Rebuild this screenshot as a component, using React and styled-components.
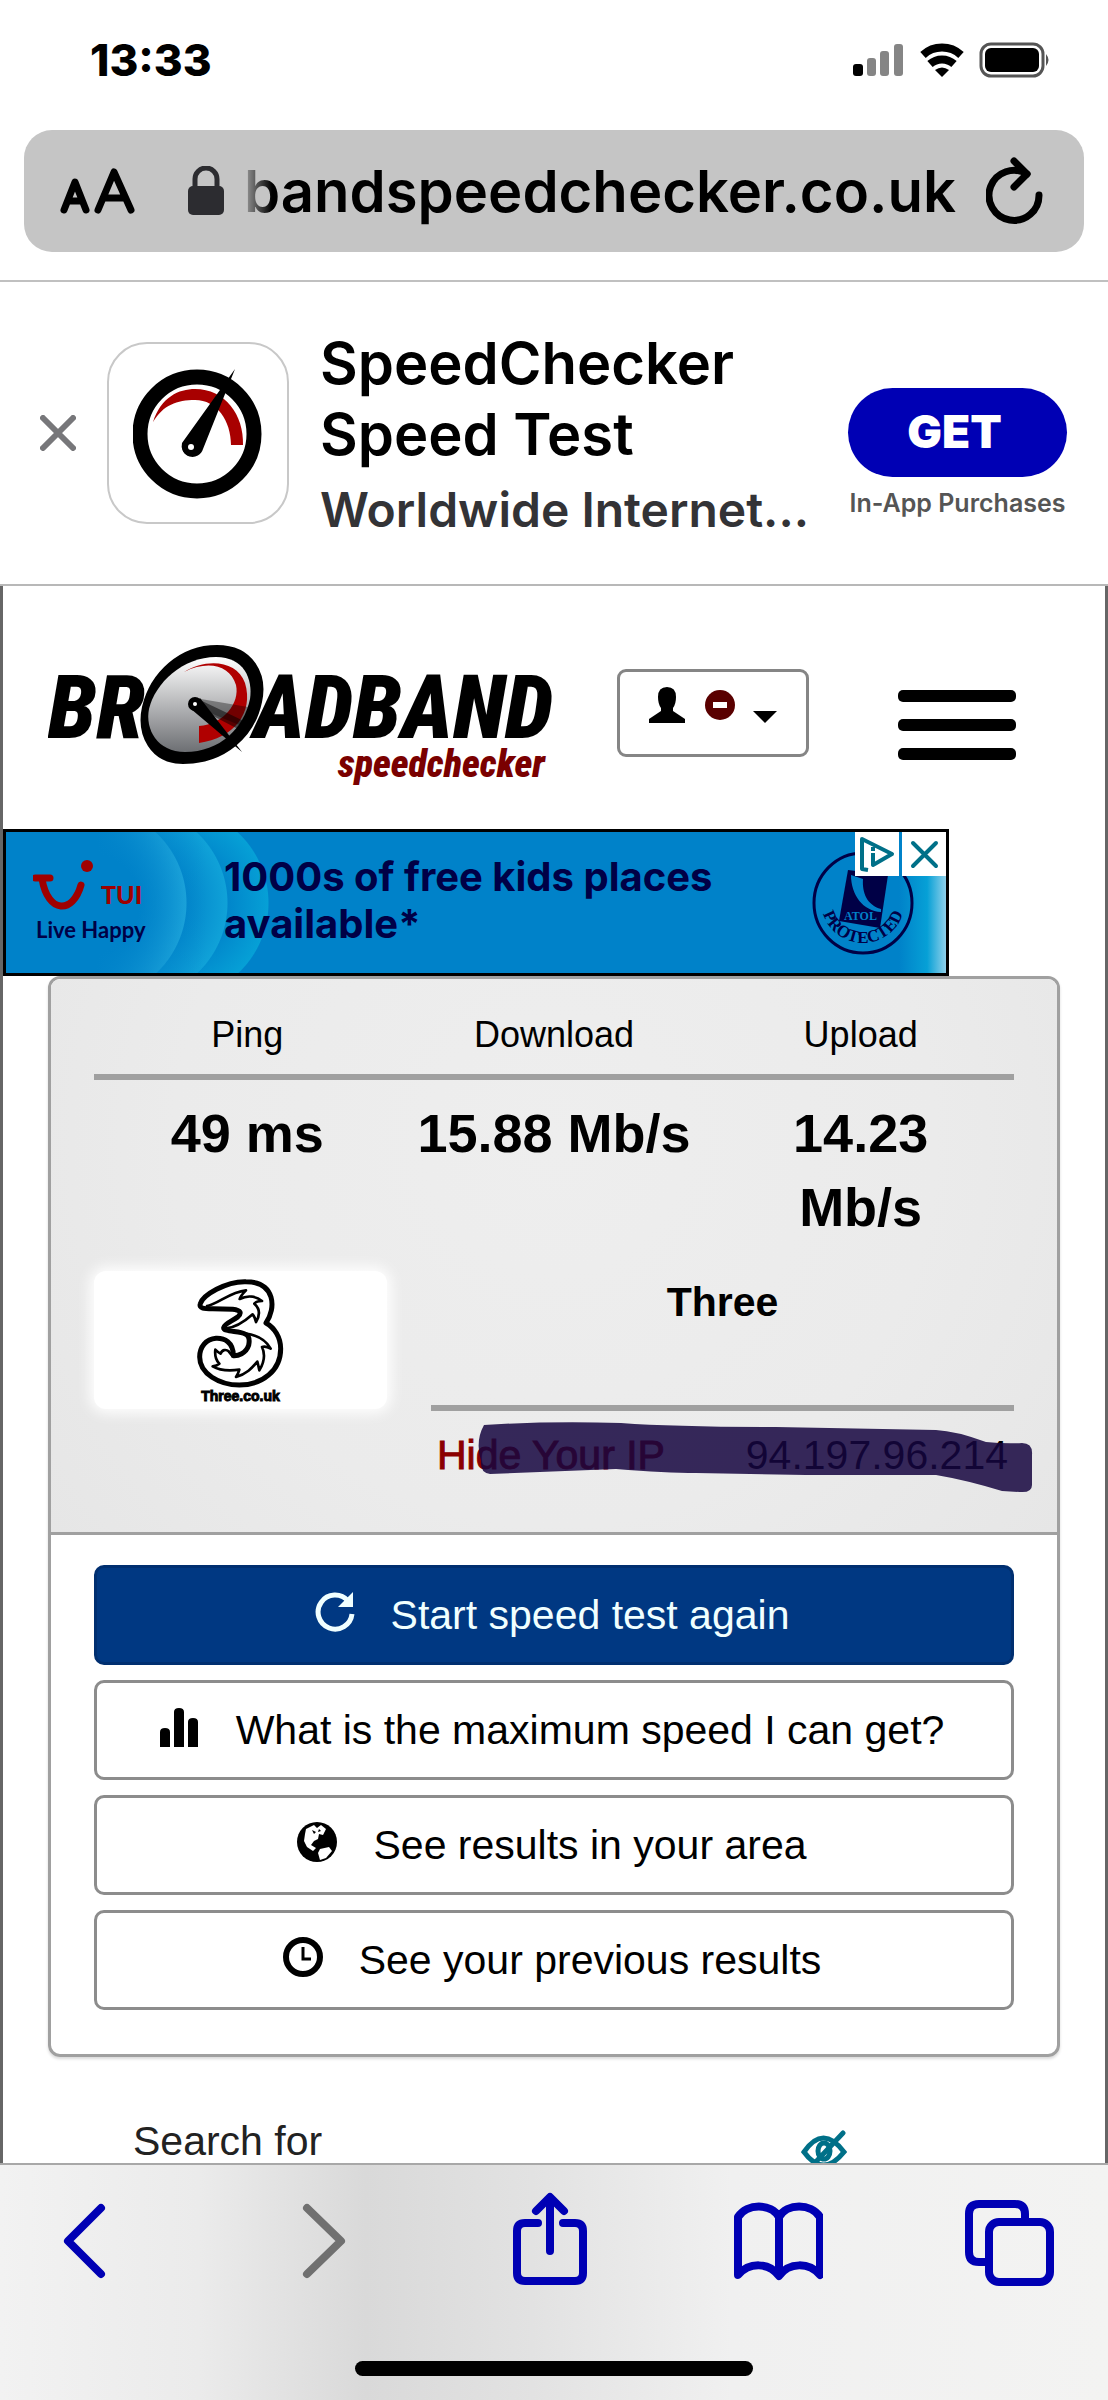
import React from "react";
import styled, { createGlobalStyle } from "styled-components";

const sans = `"Liberation Sans", Arial, sans-serif`;
const system = `Inter, "Liberation Sans", sans-serif`;

const actions = [
  { icon: "repeat", label: "Start speed test again", primary: true },
  { icon: "stats", label: "What is the maximum speed I can get?" },
  { icon: "globe", label: "See results in your area" },
  { icon: "time", label: "See your previous results" },
];

const icons = {
  repeat: (
    <>
      <path
        d="M33 9A17 17 0 1 0 37 22"
        fill="none"
        stroke="currentColor"
        strokeWidth="5"
      />
      <path d="M38 0V15H23Z" fill="currentColor" />
    </>
  ),
  stats: (
    <path
      d="M0 40V25q0-4 5-4t5 4V40ZM14 40V5q0-4 5-4t5 4V40ZM28 40V15q0-4 5-4t5 4V40Z"
      fill="currentColor"
    />
  ),
  globe: (
    <>
      <circle cx="20" cy="20" r="20" fill="currentColor" />
      <path
        d="M9 7L17 3L20 6L24 3L29 7L26 13L22 12L21 17L17 19L14 23L19 26L16 29L10 25L7 19L8 12Z"
        fill="#fff"
      />
      <path d="M23 27L32 25L35 29L29 36L23 38L21 31Z" fill="#fff" />
      <path d="M15 8L19 10L17 12ZM22 7L24 9L21 10Z" fill="currentColor" />
    </>
  ),
  time: (
    <>
      <circle
        cx="20"
        cy="20"
        r="17"
        fill="none"
        stroke="currentColor"
        strokeWidth="6"
      />
      <path
        d="M20 10V22H28"
        fill="none"
        stroke="currentColor"
        strokeWidth="3"
      />
    </>
  ),
};

const StatusIcons = () => (
  <svg width="198" height="36" viewBox="0 0 198 36">
    <rect x="0" y="22" width="10" height="12" rx="3" />
    <g fill="#858585">
      <rect x="14" y="16" width="9" height="18" rx="3" />
      <rect x="27" y="9" width="9" height="25" rx="3" />
      <rect x="41" y="2" width="9" height="32" rx="3" />
    </g>
    <g fill="none" stroke="#000" strokeWidth="8">
      <path d="M70 13A28 28 0 0 1 108 13" />
      <path d="M77 22A18 18 0 0 1 101 22" />
    </g>
    <path d="M82 28Q89 23 96 28L89 35Z" />
    <rect
      x="128"
      y="2"
      width="62"
      height="32"
      rx="10"
      fill="none"
      stroke="#555"
      strokeWidth="3"
    />
    <rect x="132" y="6" width="54" height="24" rx="6" />
    <path d="M193 12Q198 18 193 24Z" fill="#555" />
  </svg>
);

const AppIcon = () => (
  <svg width="130" height="140" viewBox="0 0 130 140">
    <circle
      cx="64"
      cy="71"
      r="57"
      fill="none"
      stroke="#000"
      strokeWidth="15"
    />
    <path
      d="M20 59C28 34 46 26 62 26C92 26 111 52 110 82H98C98 58 84 37 62 37C44 37 30 42 20 59Z"
      fill="#a80000"
    />
    <path d="M102 6L70 86A9 9 0 0 1 49 80Z" />
    <circle cx="58" cy="84" r="9" />
    <circle cx="58" cy="84" r="3" fill="#fff" />
  </svg>
);

const Logo = () => (
  <svg width="510" height="152" viewBox="0 0 510 152">
    <defs>
      <linearGradient id="dial" x1="0" y1="0" x2="0" y2="1">
        <stop offset="0" stopColor="#fff" />
        <stop offset="1" stopColor="#6d6f73" />
      </linearGradient>
    </defs>
    <LogoText x="0" y="101" $size={88}>
      BR
    </LogoText>
    <LogoText x="505" y="101" $size={88} textAnchor="end">
      ADBAND
    </LogoText>
    <LogoText x="497" y="140" $size={38} textAnchor="end" fill="#7a0000">
      speedchecker
    </LogoText>
    <path
      d="M169 9C205 9 219 38 213 65C206 99 177 126 135 126C103 126 89 98 95 70C103 36 132 9 169 9Z"
      stroke="#000"
      strokeWidth="2"
    />
    <path
      d="M168 20C196 20 205 42 202 62C196 91 172 115 137 115C109 115 97 92 101 72C107 46 135 20 168 20Z"
      fill="url(#dial)"
    />
    <path
      d="M136 35C158 21 189 23 197 46C206 76 186 101 151 106V89C176 87 192 66 188 48C182 28 160 23 136 35Z"
      fill="#b00000"
    />
    <path d="M147 61L200 70L196 90L148 70Z" fill="#000" opacity="0.35" />
    <path d="M152 63L198 85L190 92L148 70Z" fill="#000" opacity="0.5" />
    <path d="M152 61L194 115L143 72Z" />
    <circle cx="147" cy="67" r="7" />
    <circle cx="147" cy="67" r="2" fill="#fff" />
  </svg>
);

const TuiLogo = () => (
  <svg width="120" height="110" viewBox="0 -9 120 110">
    <path
      d="M2 21H17M9 22C15 57 40 57 48 28"
      fill="none"
      stroke="#a00000"
      strokeWidth="7"
      strokeLinecap="round"
    />
    <circle cx="54" cy="9" r="6" fill="#a00000" />
    <AdText x="68" y="47" fill="#a00000" $size={25} $heavy>
      TUI
    </AdText>
    <AdText x="3" y="81" fill="#000046" $size={22}>
      Live Happy
    </AdText>
  </svg>
);

const AtolBadge = () => (
  <svg width="104" height="108" viewBox="0 0 104 108">
    <defs>
      <path id="atolCurve" d="M11 61A42 42 0 0 0 93 61" />
    </defs>
    <ellipse
      cx="52"
      cy="54"
      rx="49"
      ry="50"
      fill="none"
      stroke="#000046"
      strokeWidth="3"
    />
    <path d="M37 21L77 26L69 79L28 72Z" fill="#000046" />
    <path
      d="M40 26C40 46 52 62 70 63V60C56 56 51 44 52 30Z"
      fill="#0080c8"
    />
    <SerifText x="33" y="71" $size={12} fill="#0080c8">
      ATOL
    </SerifText>
    <SerifText $size={17} fill="#000046">
      <textPath href="#atolCurve" startOffset="50%" textAnchor="middle">
        PROTECTED
      </textPath>
    </SerifText>
  </svg>
);

const ThreeLogo = () => (
  <svg width="94" height="114" viewBox="404 104 282 342">
    <g fill="none" stroke="#000" strokeLinejoin="round">
      <path
        strokeWidth="15"
        d="M620 248C650 205 650 125 560 124C500 122 430 165 423 190C418 205 435 205 460 205L520 207C545 210 548 218 535 230C520 242 495 250 493 262C492 272 520 272 545 277C570 282 572 295 568 315C560 340 535 347 522 346C522 305 495 293 470 294C440 296 421 320 421 350C421 400 480 434 540 434C610 434 664 390 664 325C664 290 645 262 620 248Z"
      />
      <path
        strokeWidth="8"
        d="M440 198C480 190 510 155 560 150C550 160 543 168 541 176C565 163 590 168 608 182C600 182 590 184 585 190C602 205 602 225 590 245C588 235 585 228 580 222C560 240 530 262 500 264"
      />
      <path
        strokeWidth="8"
        d="M560 280C600 285 620 300 634 325C625 320 615 318 608 320C620 345 612 370 600 390C598 380 596 372 594 364C580 380 565 400 530 410C535 402 538 396 540 388C510 392 480 390 460 378C468 377 474 375 480 370C470 360 466 345 468 328C474 334 478 338 484 340C488 328 500 326 508 333L520 348"
      />
    </g>
  </svg>
);

const App = () => {
  return (
    <>
      <GlobalStyle />
      <Page>
        <StatusBar>
          <Clock>13:33</Clock>
          <StatusIcons />
        </StatusBar>
        <AddressArea>
          <AddressBar>
            <IconButton aria-label="Text size">
              <svg width="76" height="48" viewBox="0 0 76 48">
                <g
                  fill="none"
                  stroke="#000"
                  strokeWidth="7"
                  strokeLinecap="round"
                  strokeLinejoin="round"
                >
                  <path d="M4 43L15 15L26 43M8 34H22" />
                  <path d="M38 43L54 5L71 43M44 31H65" />
                </g>
              </svg>
            </IconButton>
            <svg width="36" height="50" viewBox="0 0 36 50">
              <rect y="20" width="36" height="29" rx="5" fill="#2c2c30" />
              <path
                d="M7 21V13A11 11 0 0 1 29 13V21"
                fill="none"
                stroke="#2c2c30"
                strokeWidth="5"
              />
            </svg>
            <AddressInput
              aria-label="Address"
              readOnly
              value="bandspeedchecker.co.uk"
            />
            <IconButton aria-label="Reload">
              <svg width="58" height="68" viewBox="0 0 58 68">
                <g
                  fill="none"
                  stroke="#000"
                  strokeWidth="7"
                  strokeLinecap="round"
                  strokeLinejoin="round"
                >
                  <path d="M41 17A25 25 0 1 0 53 38" />
                  <path d="M28 4L41 17L28 30" />
                </g>
              </svg>
            </IconButton>
          </AddressBar>
        </AddressArea>

        <AppBanner>
          <IconButton aria-label="Close banner">
            <svg width="36" height="36" viewBox="0 0 36 36">
              <path
                d="M3 3L33 33M33 3L3 33"
                stroke="#77777a"
                strokeWidth="6"
                strokeLinecap="round"
              />
            </svg>
          </IconButton>
          <AppTile>
            <AppIcon />
          </AppTile>
          <AppInfo>
            <AppTitle>
              SpeedChecker
              <br />
              Speed Test
            </AppTitle>
            <AppSubtitle>Worldwide Internet...</AppSubtitle>
          </AppInfo>
          <AppGet>
            <GetButton>GET</GetButton>
            <Purchases>In-App Purchases</Purchases>
          </AppGet>
        </AppBanner>

        <Site>
          <SiteHeader>
            <LogoLink href="#" aria-label="Broadband speedchecker">
              <Logo />
            </LogoLink>
            <AccountButton aria-label="Account">
              <svg width="132" height="40" viewBox="0 0 132 40">
                <path d="M9 11Q9 1 18 1T27 11Q27 18 24 22V25L36 33V37H0V33L12 25V22Q9 18 9 11Z" />
                <circle cx="71" cy="19" r="15" fill="#5a0000" />
                <rect x="64" y="16" width="14" height="6" fill="#fff" />
                <path d="M104 25H128L116 37Z" />
              </svg>
            </AccountButton>
            <MenuButton aria-label="Menu">
              <span />
              <span />
              <span />
            </MenuButton>
          </SiteHeader>

          <Ad>
            <TuiLogo />
            <AdHeadline>
              1000s of free kids places
              <br />
              available*
            </AdHeadline>
            <AtolBadge />
            <AdChoices>
              <AdButton aria-label="Ad information">
                <svg width="44" height="44" viewBox="0 0 44 44">
                  <g fill="none" stroke="#007088" strokeLinejoin="round">
                    <path strokeWidth="4" d="M13 38L7 37V7L37 22L18 33V21" />
                    <path strokeWidth="4" d="M18 15V19" />
                  </g>
                </svg>
              </AdButton>
              <AdButton aria-label="Close ad">
                <svg width="44" height="44" viewBox="0 0 44 44">
                  <path
                    d="M11 11L34 34M34 11L11 34"
                    stroke="#007088"
                    strokeWidth="4"
                    strokeLinecap="round"
                  />
                </svg>
              </AdButton>
            </AdChoices>
          </Ad>

          <Card>
            <Results>
              <ResultTable>
                <thead>
                  <tr>
                    <th scope="col">Ping</th>
                    <th scope="col">Download</th>
                    <th scope="col">Upload</th>
                  </tr>
                </thead>
                <tbody>
                  <tr>
                    <td>49 ms</td>
                    <td>15.88 Mb/s</td>
                    <td>14.23 Mb/s</td>
                  </tr>
                </tbody>
              </ResultTable>
              <Provider>
                <ProviderLogo>
                  <ThreeLogo />
                  <span>Three.co.uk</span>
                </ProviderLogo>
                <ProviderInfo>
                  <ProviderName>Three</ProviderName>
                  <IpRow>
                    <a href="#">Hide Your IP</a>
                    <span>94.197.96.214</span>
                    <Scribble
                      width="560"
                      height="74"
                      viewBox="0 0 560 74"
                      aria-hidden="true"
                    >
                      <path d="M8 4Q70 0 145 2Q200 6 300 6L460 9Q480 10 510 21Q530 23 546 22Q557 22 556 34V64Q556 72 544 71L526 70Q490 59 460 54L330 54L220 52Q190 52 140 48L14 53Q4 52 5 40Q-1 20 8 4Z" />
                    </Scribble>
                  </IpRow>
                </ProviderInfo>
              </Provider>
            </Results>
            <Actions>
              {actions.map((action) => (
                <ActionButton key={action.label} $primary={action.primary}>
                  <svg width="40" height="40" viewBox="0 0 40 40">
                    {icons[action.icon]}
                  </svg>
                  {action.label}
                </ActionButton>
              ))}
            </Actions>
          </Card>

          <SearchRow>
            <span>Search for</span>
            <svg width="46" height="46" viewBox="0 0 46 46">
              <g
                fill="none"
                stroke="#007088"
                strokeWidth="5"
                strokeLinecap="round"
              >
                <path d="M3 22Q22 -6 43 22Q22 48 3 22Z" />
                <ellipse cx="23" cy="21" rx="6" ry="8" />
                <path d="M10 37L42 3" />
              </g>
            </svg>
          </SearchRow>
        </Site>

        <Toolbar>
          <ToolbarButtons>
            <ToolButton aria-label="Back">
              <path d="M60 3L27 36L60 69" />
            </ToolButton>
            <ToolButton aria-label="Forward" $muted>
              <path d="M35 3L69 36L35 69" />
            </ToolButton>
            <ToolButton aria-label="Share">
              <path d="M35 18H22Q14 18 14 26V68Q14 76 22 76H72Q80 76 80 68V26Q80 18 72 18H60" />
              <path d="M47 46V-7M33 6L47 -8L61 6" />
            </ToolButton>
            <ToolButton aria-label="Bookmarks">
              <path d="M46 12C38 -2 14 -2 5 12V70C16 57 36 57 46 71C56 57 76 57 87 70V12C78 -2 54 -2 46 12V69" />
            </ToolButton>
            <ToolButton aria-label="Tabs">
              <path d="M22 57H15Q5 57 5 47V9Q5 -1 15 -1H51Q61 -1 61 9V15" />
              <rect x="25" y="17" width="61" height="60" rx="10" />
            </ToolButton>
          </ToolbarButtons>
          <HomeIndicator />
        </Toolbar>
      </Page>
    </>
  );
};

const ToolButton = ({ children, $muted, ...rest }) => (
  <IconButton {...rest}>
    <ToolIcon width="90" height="100" viewBox="0 -14 90 100" $muted={$muted}>
      {children}
    </ToolIcon>
  </IconButton>
);

export default App;

const GlobalStyle = createGlobalStyle`
  * {
    box-sizing: border-box;
  }
  body {
    margin: 0;
    background: #fff;
    color: #000;
    font-family: ${sans};
  }
  button {
    font-family: inherit;
    color: inherit;
    cursor: pointer;
  }
  svg {
    display: block;
    flex-shrink: 0;
  }
`;

const Page = styled.div`
  display: flex;
  flex-direction: column;
  height: 100vh;
  overflow: hidden;
`;

const StatusBar = styled.div`
  display: flex;
  flex-shrink: 0;
  align-items: center;
  justify-content: space-between;
  height: 120px;
  padding: 0 57px 0 90px;
  font-family: ${system};
`;

const Clock = styled.span`
  font-size: 44px;
  font-weight: 800;
`;

const AddressArea = styled.div`
  flex-shrink: 0;
  padding: 10px 24px 28px;
  border-bottom: 2px solid #c0c0c0;
`;

const AddressBar = styled.div`
  display: flex;
  align-items: center;
  height: 122px;
  padding: 0 40px 0 36px;
  border-radius: 28px;
  background: #c5c5c5;
  & > svg {
    margin: 0 20px 0 52px;
  }
`;

const AddressInput = styled.input`
  flex: 1;
  min-width: 0;
  padding: 0;
  border: 0;
  outline: 0;
  background: none;
  color: #000;
  font-family: ${system};
  font-size: 58px;
  font-weight: 600;
  mask-image: linear-gradient(to right, rgba(0, 0, 0, 0.2), #000 28px);
`;

const IconButton = styled.button`
  display: flex;
  flex-shrink: 0;
  padding: 0;
  border: 0;
  background: none;
`;

const AppBanner = styled.section`
  display: flex;
  flex-shrink: 0;
  align-items: center;
  height: 304px;
  padding: 0 41px 0 40px;
  border-bottom: 2px solid #b8b8b8;
  font-family: ${system};
`;

const AppTile = styled.div`
  display: flex;
  flex-shrink: 0;
  align-items: center;
  justify-content: center;
  width: 182px;
  height: 182px;
  margin: 0 31px;
  border: 2px solid #c8c8c8;
  border-radius: 40px;
`;

const AppInfo = styled.div`
  flex: 1;
  padding-top: 12px;
  white-space: nowrap;
`;

const AppTitle = styled.h2`
  margin: 0;
  font-size: 58px;
  font-weight: 600;
  line-height: 71px;
`;

const AppSubtitle = styled.p`
  margin: 0;
  color: #333336;
  font-size: 48px;
  font-weight: 600;
  line-height: 80px;
`;

const AppGet = styled.div`
  display: flex;
  flex-direction: column;
  align-items: center;
  gap: 11px;
  padding-top: 40px;
`;

const GetButton = styled.button`
  width: 219px;
  height: 89px;
  padding: 0 6px 3px 0;
  border: 0;
  border-radius: 45px;
  background: #0000b4;
  && {
    color: #fff;
  }
  font-size: 46px;
  font-weight: 900;
`;

const Purchases = styled.small`
  color: #555;
  font-size: 25px;
  font-weight: 600;
  line-height: 30px;
`;

const Site = styled.main`
  flex: 1;
  min-height: 0;
  overflow: hidden;
  border: solid #666;
  border-width: 0 3px;
`;

const SiteHeader = styled.header`
  display: flex;
  align-items: center;
  height: 243px;
  padding: 10px 89px 0 45px;
`;

const LogoLink = styled.a`
  margin-right: 59px;
`;

const LogoText = styled.text`
  font-family: "Roboto Condensed", "Open Sans Condensed", "Noto Sans Condensed",
    Roboto, sans-serif;
  font-size: ${({ $size }) => $size}px;
  font-style: italic;
  font-weight: 900;
`;

const AccountButton = styled.button`
  display: flex;
  align-items: flex-start;
  width: 192px;
  height: 88px;
  padding: 14px 29px;
  border: 3px solid #858585;
  border-radius: 9px;
  background: #fff;
`;

const MenuButton = styled.button`
  display: flex;
  flex-direction: column;
  gap: 17px;
  width: 118px;
  margin-left: auto;
  padding: 24px 0 0;
  border: 0;
  background: none;
  span {
    width: 100%;
    height: 12px;
    border-radius: 5px;
    background: #000;
  }
`;

const Ad = styled.aside`
  position: relative;
  display: flex;
  align-items: center;
  width: 946px;
  max-width: 100%;
  height: 147px;
  padding: 0 31px 0 27px;
  border: 3px solid #000;
  background: linear-gradient(to right, #0082c9 90px, rgba(0, 130, 201, 0) 200px),
    radial-gradient(
      circle at 84px 71px,
      #0082c9 50px,
      #20a8dc 96px,
      transparent 97px
    ),
    radial-gradient(
      circle at 125px 71px,
      #0082c9 50px,
      #10a2d8 96px,
      transparent 97px
    ),
    radial-gradient(
      circle at 166px 71px,
      #0082c9 50px,
      #06a0d6 96px,
      transparent 97px
    ),
    linear-gradient(to right, #0082c9 95%, #06a0d6 98%, #8fd0ea 100%);
`;

const AdText = styled.text`
  font-family: Lato, sans-serif;
  font-size: ${({ $size }) => $size}px;
  font-weight: ${({ $heavy }) => ($heavy ? 900 : 700)};
`;

const SerifText = styled.text`
  font-family: "Liberation Serif", serif;
  font-size: ${({ $size }) => $size}px;
  font-weight: 700;
`;

const AdHeadline = styled.p`
  flex: 1;
  margin: 0 0 5px 71px;
  color: #000046;
  font-family: ${system};
  font-size: 40px;
  font-weight: 700;
  line-height: 47px;
  white-space: nowrap;
`;

const AdChoices = styled.div`
  position: absolute;
  top: 0;
  right: 0;
  display: flex;
  gap: 3px;
  background: #0082c9;
`;

const AdButton = styled.button`
  padding: 0;
  border: 0;
  background: #fff;
`;

const Card = styled.section`
  margin: 0 45px;
  border: 3px solid #a0a0a0;
  border-radius: 12px;
  box-shadow: 0 2px 3px rgba(0, 0, 0, 0.15);
`;

const Results = styled.div`
  padding: 32px 43px 41px;
  border-bottom: 3px solid #a0a0a0;
  border-radius: 9px 9px 0 0;
  background: radial-gradient(circle at 50% 30%, #eee, #ebebeb 60%, #e6e6e6);
`;

const ResultTable = styled.table`
  width: 100%;
  border-collapse: collapse;
  table-layout: fixed;
  text-align: center;
  th {
    height: 66px;
    padding: 0 0 16px;
    border-bottom: 6px solid #a0a0a0;
    font-size: 36px;
    font-weight: 400;
  }
  td {
    padding: 16px 40px 0;
    font-size: 54px;
    font-weight: 700;
    line-height: 74px;
    vertical-align: top;
  }
  td:nth-child(2) {
    padding: 16px 0 0;
  }
`;

const Provider = styled.div`
  display: flex;
  gap: 44px;
  margin-top: 27px;
`;

const ProviderLogo = styled.div`
  display: flex;
  flex-direction: column;
  align-items: center;
  width: 293px;
  height: 138px;
  padding-top: 4px;
  border-radius: 12px;
  background: #fff;
  box-shadow: 0 0 14px 4px #fff;
  font-size: 14px;
  font-weight: 700;
  line-height: 14px;
  -webkit-text-stroke: 1px #000;
`;

const ProviderInfo = styled.div`
  flex: 1;
  font-size: 41px;
`;

const ProviderName = styled.div`
  height: 140px;
  padding-top: 7px;
  border-bottom: 6px solid #a0a0a0;
  font-weight: 700;
  line-height: 48px;
  text-align: center;
`;

const IpRow = styled.div`
  position: relative;
  display: flex;
  justify-content: space-between;
  padding: 20px 6px 12px;
  line-height: 48px;
  a {
    color: #8b0000;
    text-decoration: none;
    -webkit-text-stroke: 1px #8b0000;
  }
`;

const Scribble = styled.svg`
  position: absolute;
  top: 10px;
  right: -22px;
  fill: #160640;
  opacity: 0.85;
`;

const Actions = styled.div`
  display: flex;
  flex-direction: column;
  gap: 15px;
  padding: 30px 43px 44px;
`;

const ActionButton = styled.button`
  display: flex;
  align-items: center;
  justify-content: center;
  gap: 36px;
  height: 100px;
  padding: 0 4px 0 0;
  border: 3px solid ${({ $primary }) => ($primary ? "#002f70" : "#8c8c8c")};
  border-radius: 10px;
  background: ${({ $primary }) => ($primary ? "#003882" : "#fff")};
  && {
    color: ${({ $primary }) => ($primary ? "#f0ffff" : "#000")};
  }
  font-size: 41px;
  svg {
    margin-bottom: 6px;
  }
`;

const SearchRow = styled.div`
  display: flex;
  align-items: flex-start;
  justify-content: space-between;
  padding: 60px 258px 0 130px;
  color: #222;
  font-size: 41px;
  line-height: 48px;
  svg {
    margin-top: 13px;
  }
`;

const Toolbar = styled.nav`
  display: flex;
  flex-direction: column;
  flex-shrink: 0;
  align-items: center;
  justify-content: space-between;
  height: 237px;
  padding: 26px 0 24px;
  border-top: 2px solid #a8a8a8;
  background: linear-gradient(
    to right,
    #f2f2f2,
    #ebebeb 18%,
    #d9d9d9 33%,
    #e2e2e2 48%,
    #f0f0f0 66%,
    #f3f3f2
  );
`;

const ToolbarButtons = styled.div`
  display: flex;
  align-self: stretch;
  justify-content: space-between;
  padding: 0 54px 0 41px;
`;

const ToolIcon = styled.svg`
  fill: none;
  stroke: ${({ $muted }) => ($muted ? "#707070" : "#0000b4")};
  stroke-width: 8px;
  stroke-linecap: round;
  stroke-linejoin: round;
`;

const HomeIndicator = styled.div`
  width: 36%;
  height: 15px;
  border-radius: 8px;
  background: #000;
`;
